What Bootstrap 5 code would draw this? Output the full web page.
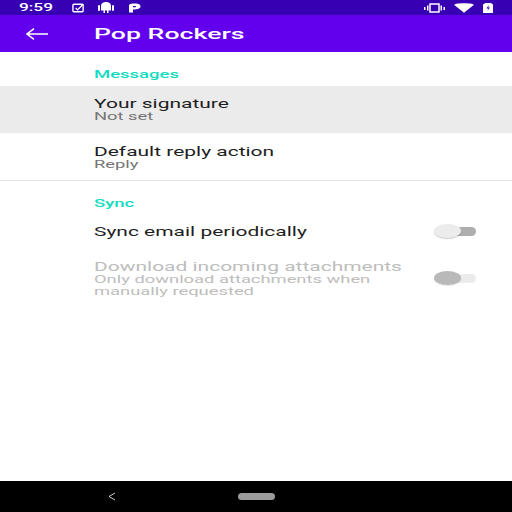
<!DOCTYPE html>
<html lang="en">
<head>
<meta charset="utf-8">
<title>Pop Rockers</title>
<link href="https://cdn.jsdelivr.net/npm/bootstrap@5.3.0/dist/css/bootstrap.min.css" rel="stylesheet">
<style>
html,body{height:512px;overflow:hidden;background:#fff;}
body{font-family:Roboto,"Liberation Sans",sans-serif;}
.screen{height:512px;}
.wide{display:inline-block;transform:scaleX(1.72);transform-origin:left center;white-space:nowrap;}
.sbar{height:15px;background:#3700b3;color:#fff;padding:0 19px;font-size:11px;font-weight:500;}
.sbar svg{display:block;}
.sbar .wide{transform:scaleX(1.57);}
.clock{width:53px;padding-top:1px;}
.ic2{margin-left:13px;}
.ic3{margin-left:14px;}
.ic5{margin-left:9px;}
.ic6{margin-left:9px;}
.abar{height:37px;background:#6200ee;color:#fff;}
.backbtn{width:94px;padding-left:26px;}
.apptitle{font-size:14.5px;font-weight:500;line-height:37px;padding-top:2px;}
.abar .wide{transform:scaleX(1.84);}
.content{background:#fff;}
.pane{padding-left:94px;}
.sect{color:#0fdcc0;font-size:10.5px;font-weight:500;line-height:14px;}
.sect .wide{transform:scaleX(1.76);}
.sect1{padding-top:16px;height:34px;}
.sect2{padding-top:16px;height:33px;}
.hi{background:#ebebeb;}
.prefrow{height:47px;padding-top:11px;}
.prefrow2{padding-top:12px;}
.ttl{font-size:12.2px;line-height:14px;color:#1e1e1e;}
.sub{font-size:10.2px;line-height:12px;color:#757575;}
.sub .wide{transform:scaleX(1.8);}
.rule{height:1px;background:#e2e2e2;}
.togrow{padding-right:36px;}
.syncrow{height:35px;padding-top:11px;}
.dlrow{height:52px;padding-top:7px;}
.off .ttl{color:#bdbdbd;}
.off .sub{color:#bdbdbd;}
.tog{position:relative;width:42px;height:14px;flex:none;}
.t1{margin-top:-1px;}
.t2{margin-bottom:2px;}
.trk{position:absolute;left:14px;right:0;top:3px;height:9px;border-radius:5px;}
.thumb{position:absolute;left:0;top:0;width:27px;height:14px;border-radius:50%;}
.t1 .trk{background:#aeaeae;}
.t1 .thumb{background:#ececec;box-shadow:0 1px 1px rgba(0,0,0,.2);}
.t2 .trk{background:#ebebeb;}
.t2 .thumb{background:#b9b9b9;box-shadow:0 1px 1px rgba(0,0,0,.1);}
.nbar{height:31px;background:#000;}
.nback{width:238px;padding-left:108px;}
.pill{width:37px;height:7px;border-radius:4px;background:#9b9b9b;}
</style>
</head>
<body>
<div class="screen d-flex flex-column">
  <div class="sbar d-flex align-items-center flex-shrink-0">
    <div class="clock"><span class="wide">9:59</span></div>
    <svg width="13" height="10" viewBox="0 0 14 10"><rect x="1" y="1" width="11" height="8" rx="1" fill="none" stroke="#fff" stroke-width="1.5"/><path d="M4 5l2 2 6-6" fill="none" stroke="#fff" stroke-width="1.4"/></svg>
    <svg width="16" height="11" viewBox="0 0 16 11" class="ic2"><rect x="0" y="3" width="2" height="6" rx="1" fill="#fff"/><rect x="14" y="3" width="2" height="6" rx="1" fill="#fff"/><path d="M3 4C3 1 5.500 0 8 0s5 1 5 4v4.500h-2.500V11h-1.500V8.500h-2V11H5.500V8.500H3z" fill="#fff"/></svg>
    <svg width="13" height="10" viewBox="0 0 13 10" class="ic3"><path d="M1 2.500C1 1 3 .5 7 .5c4 0 5.500 1 5.500 3S10 6.500 5 6.500V9.500H1zM5 3v1.300h2.500c.8 0 .8-1.300 0-1.300z" fill="#fff" fill-rule="evenodd"/></svg>
    <div class="flex-grow-1"></div>
    <svg width="21" height="10" viewBox="0 0 21 10"><rect x="6" y="1" width="9" height="8" fill="none" stroke="#fff" stroke-width="1.500"/><rect x="0" y="4" width="1.500" height="3" fill="#fff"/><rect x="3" y="2.500" width="1.500" height="5" fill="#fff"/><rect x="16.500" y="2.500" width="1.500" height="5" fill="#fff"/><rect x="19.500" y="4" width="1.500" height="3" fill="#fff"/></svg>
    <svg width="20" height="10" viewBox="0 0 21 10" class="ic5"><path d="M0 1.500C3 0 7 0 10.500 0S18 0 21 1.500L10.500 10z" fill="#fff"/></svg>
    <svg width="10" height="10" viewBox="0 0 10 10" class="ic6"><path d="M2.500 0H8l2 1.500V10H0V1.500z" fill="#fff"/><path d="M5.800 2L3.500 5.500h2L4.500 8l2.500-3.500H5.200z" fill="#3700b3"/></svg>
  </div>
  <div class="abar d-flex align-items-center flex-shrink-0">
    <div class="backbtn"><svg width="22" height="12" viewBox="0 0 22 12" class="d-block"><path d="M1 6H22M8 .7L1 6l7 5.300" fill="none" stroke="#fff" stroke-width="1.500"/></svg></div>
    <span class="apptitle wide">Pop Rockers</span>
  </div>
  <div class="content flex-grow-1">
    <div class="pane sect sect1"><span class="wide">Messages</span></div>
    <div class="pane prefrow hi">
      <div class="ttl"><span class="wide">Your signature</span></div>
      <div class="sub"><span class="wide">Not set</span></div>
    </div>
    <div class="pane prefrow prefrow2">
      <div class="ttl"><span class="wide">Default reply action</span></div>
      <div class="sub"><span class="wide">Reply</span></div>
    </div>
    <div class="rule"></div>
    <div class="pane sect sect2"><span class="wide">Sync</span></div>
    <div class="pane togrow syncrow d-flex justify-content-between align-items-start">
      <div class="ttl"><span class="wide">Sync email periodically</span></div>
      <div class="tog t1"><div class="trk"></div><div class="thumb"></div></div>
    </div>
    <div class="pane togrow dlrow off d-flex justify-content-between align-items-center">
      <div>
        <div class="ttl"><span class="wide">Download incoming attachments</span></div>
        <div class="sub"><span class="wide">Only download attachments when</span></div>
        <div class="sub"><span class="wide">manually requested</span></div>
      </div>
      <div class="tog t2"><div class="trk"></div><div class="thumb"></div></div>
    </div>
  </div>
  <div class="nbar d-flex align-items-center flex-shrink-0">
    <div class="nback"><svg width="8" height="9" viewBox="0 0 8 9" class="d-block"><path d="M7 1L1 4.500 7 8" fill="none" stroke="#cfcfcf" stroke-width="1"/></svg></div>
    <div class="pill"></div>
  </div>
</div>
<script src="https://cdn.jsdelivr.net/npm/bootstrap@5.3.0/dist/js/bootstrap.bundle.min.js"></script>
</body>
</html>
